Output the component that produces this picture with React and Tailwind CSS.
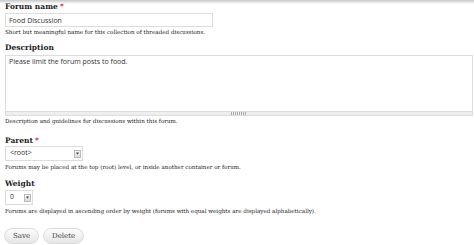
import { useState } from "react";

const serif = "font-['DejaVu_Serif',Georgia,serif]";
const sans = "font-['Open_Sans','DejaVu_Sans',sans-serif]";

function Label({ children, required }) {
  return (
    <div className={`${serif} text-[7.5px] font-bold leading-[10px] text-[#222]`}>
      {children}
      {required && <span className="ml-[2px] font-normal text-[#c00]">*</span>}
    </div>
  );
}

function Help({ children }) {
  return <div className={`${serif} text-[5.6px] leading-[9px] text-[#222]`}>{children}</div>;
}

function FakeSelect({ value, width }) {
  return (
    <div className={`flex h-[15px] items-center justify-between border border-[#ddd] bg-white pl-[4px] pr-[1px] ${width}`}>
      <span className={`${sans} text-[7px] text-[#333]`}>{value}</span>
      <span className="flex h-[8px] w-[7px] items-center justify-center border border-[#bbb] bg-gradient-to-b from-[#f6f6f6] to-[#dcdcdc]">
        <svg width="3" height="3" viewBox="0 0 4 3">
          <path d="M0 0h4L2 3z" fill="#444" />
        </svg>
      </span>
    </div>
  );
}

export default function App() {
  const [name, setName] = useState("Food Discussion");
  const [desc, setDesc] = useState("Please limit the forum posts to food.");

  return (
    <div className="relative h-[245px] w-[474px] overflow-hidden bg-white pl-[5px] pt-[2px]">
      <div className="pointer-events-none absolute inset-x-0 top-0 h-[4px] bg-gradient-to-b from-[#c8c8c8] to-transparent" />

      <Label required>Forum name</Label>
      <input
        value={name}
        onChange={(e) => setName(e.target.value)}
        className={`${sans} mt-[1px] block h-[14px] w-[208px] border border-[#ddd] px-[3px] text-[7px] text-[#333] outline-none`}
      />
      <div className="mt-[1px]">
        <Help>Short but meaningful name for this collection of threaded discussions.</Help>
      </div>

      <div className="mt-[6px]">
        <Label>Description</Label>
      </div>
      <div className="mt-[2px] w-[468px]">
        <textarea
          value={desc}
          onChange={(e) => setDesc(e.target.value)}
          className={`${sans} block h-[56px] w-full resize-none border border-[#ddd] border-b-0 px-[3px] pt-[1px] text-[7px] leading-[10px] text-[#333] outline-none`}
        />
        <div className="flex h-[5px] items-center justify-center border border-[#ddd] bg-[#eee]">
          <div className="h-[3px] w-[16px] bg-[repeating-linear-gradient(90deg,#aaa_0_1px,#eee_1px_2px)]" />
        </div>
      </div>
      <div className="mt-[1px]">
        <Help>Description and guidelines for discussions within this forum.</Help>
      </div>

      <div className="mt-[10px]">
        <Label required>Parent</Label>
      </div>
      <div className="mt-[0px]">
        <FakeSelect value="<root>" width="w-[78px]" />
      </div>
      <div className="mt-[2px]">
        <Help>Forums may be placed at the top (root) level, or inside another container or forum.</Help>
      </div>

      <div className="mt-[7px]">
        <Label>Weight</Label>
      </div>
      <div className="mt-[1px]">
        <FakeSelect value="0" width="w-[28px]" />
      </div>
      <div className="mt-[2px]">
        <Help>Forums are displayed in ascending order by weight (forums with equal weights are displayed alphabetically).</Help>
      </div>

      <div className="-ml-[1px] mt-[12px] flex gap-[4px]">
        {["Save", "Delete"].map((b) => (
          <button
            key={b}
            className={`${serif} h-[16px] rounded-full border border-[#ddd] bg-gradient-to-b from-[#fdfdfd] to-[#e6e6e6] px-[8px] text-[7px] text-[#444]`}
          >
            {b}
          </button>
        ))}
      </div>
    </div>
  );
}
